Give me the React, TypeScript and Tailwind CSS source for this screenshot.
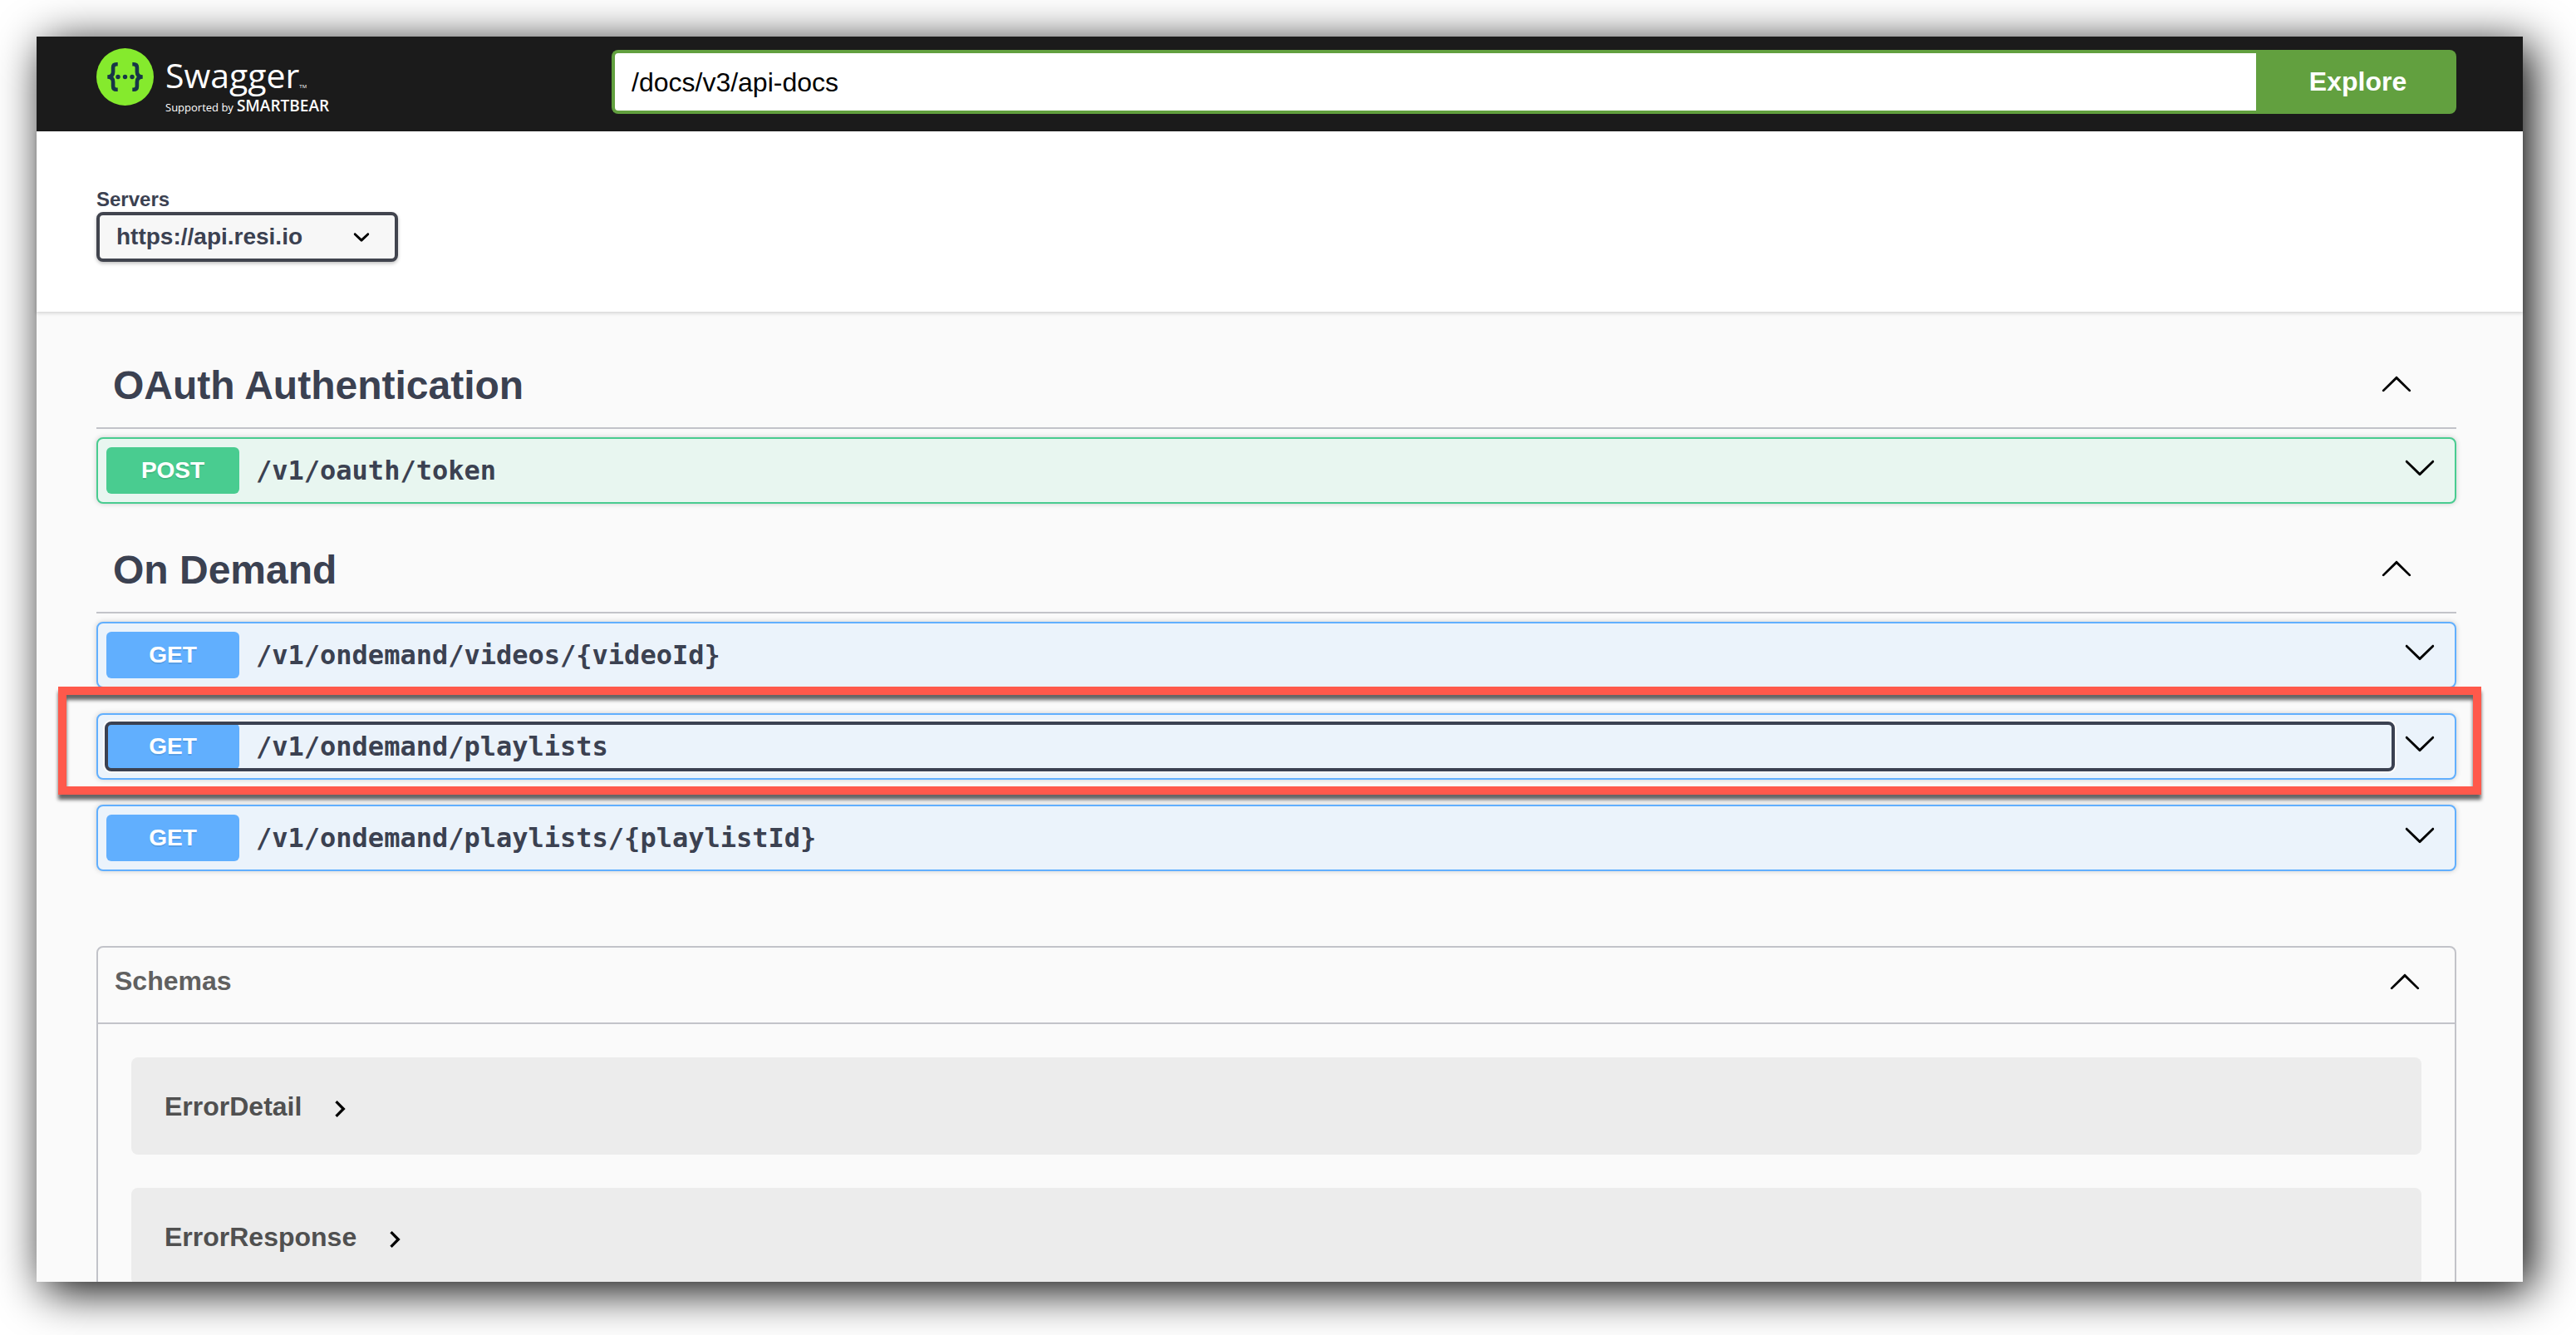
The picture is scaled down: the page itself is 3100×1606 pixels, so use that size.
import React from "react";

type Operation = {
  method: "GET" | "POST";
  path: string;
  focused?: boolean;
};

const oauthOperations: Operation[] = [{ method: "POST", path: "/v1/oauth/token" }];

const onDemandOperations: Operation[] = [
  { method: "GET", path: "/v1/ondemand/videos/{videoId}" },
  { method: "GET", path: "/v1/ondemand/playlists", focused: true },
  { method: "GET", path: "/v1/ondemand/playlists/{playlistId}" },
];

const schemas = ["ErrorDetail", "ErrorResponse"];

function ArrowUp() {
  return (
    <svg className="size-10" viewBox="0 0 20 20" aria-hidden="true">
      <path d="M17.418 14.908c.272.268.709.268.979 0s.271-.701 0-.969l-7.908-7.83c-.27-.268-.707-.268-.979 0l-7.908 7.83c-.27.268-.271.701 0 .969.271.268.709.268.979 0L10 7.767l7.418 7.141z" />
    </svg>
  );
}

function ArrowDown() {
  return (
    <svg className="size-10" viewBox="0 0 20 20" aria-hidden="true">
      <path d="M17.418 6.109c.272-.268.709-.268.979 0s.271.701 0 .969l-7.908 7.83c-.27.268-.707.268-.979 0l-7.908-7.83c-.27-.268-.271-.701 0-.969.271-.268.709-.268.979 0L10 13.25l7.418-7.141z" />
    </svg>
  );
}

function Logo() {
  return (
    <a href="#" aria-label="Swagger" className="flex w-[620px] shrink-0 items-start gap-3.5">
      <svg className="size-[69px] shrink-0" viewBox="0 0 69 69" aria-hidden="true">
        <circle cx="34.5" cy="34.5" r="34.5" fill="#85ea2d" />
        <g fill="none" stroke="#173647" strokeWidth="4.6">
          <path d="M25.7 19.2h-1.6q-4 0-4 4v5.3q0 6-6.8 6q6.8 0 6.8 6v5.3q0 4 4 4h1.6" />
          <path d="M43.3 19.2h1.6q4 0 4 4v5.3q0 6 6.8 6q-6.8 0-6.8 6v5.3q0 4-4 4h-1.6" />
        </g>
        <g fill="#173647">
          <circle cx="26" cy="34.5" r="2.7" />
          <circle cx="34.5" cy="34.5" r="2.7" />
          <circle cx="43" cy="34.5" r="2.7" />
        </g>
      </svg>
      <div className="flex flex-col gap-[3px] pt-2 font-['Open_Sans',sans-serif] text-white">
        <div className="flex items-baseline">
          <span className="text-[41px] leading-[48px]">Swagger</span>
          <span className="text-[6px] leading-none">TM</span>
        </div>
        <div className="flex items-baseline gap-1 leading-5">
          <span className="text-[13px]">Supported by</span>
          <span className="text-[19px] font-semibold">SMARTBEAR</span>
        </div>
      </div>
    </a>
  );
}

function TopBar() {
  return (
    <header className="flex shrink-0 items-start bg-[#1b1b1b] pt-3.5 pr-20 pl-[72px]">
      <Logo />
      <form className="mt-0.5 mb-[21px] flex h-[77px] min-w-0 flex-1" onSubmit={(e) => e.preventDefault()}>
        <input
          type="text"
          aria-label="API definition URL"
          defaultValue="/docs/v3/api-docs"
          className="min-w-0 flex-1 rounded-l-lg border-4 border-r-0 border-[#62a03f] bg-white px-5 text-[32px] text-black outline-none"
        />
        <button
          type="submit"
          className="w-[241px] shrink-0 rounded-r-lg bg-[#62a03f] pb-0.5 pl-1 text-[32px] font-bold text-white"
        >
          Explore
        </button>
      </form>
    </header>
  );
}

function Servers() {
  return (
    <section className="shrink-0 bg-white pt-[69px] pr-20 pb-[60px] pl-[72px] shadow-[0_2px_4px_rgba(0,0,0,0.15)]">
      <label htmlFor="servers" className="mb-0.5 block text-2xl leading-[26px] font-bold">
        Servers
      </label>
      <div className="relative w-[363px]">
        <select
          id="servers"
          className="block h-[60px] w-full appearance-none rounded-lg border-4 border-[#41444e] bg-[#f7f7f7] pr-20 pl-5 text-[28px] font-bold shadow-[0_2px_4px_rgba(0,0,0,0.25)]"
        >
          <option>https://api.resi.io</option>
        </select>
        <svg
          className="pointer-events-none absolute top-2.5 right-6 size-10"
          viewBox="0 0 20 20"
          aria-hidden="true"
        >
          <path d="M13.418 7.859c.271-.268.709-.268.978 0 .27.268.272.701 0 .969l-3.908 3.83c-.27.268-.707.268-.979 0l-3.908-3.83c-.27-.267-.27-.701 0-.969.271-.268.709-.268.978 0L10 11l3.418-3.141z" />
        </svg>
      </div>
    </section>
  );
}

function OperationRow({ method, path, focused }: Operation) {
  const post = method === "POST";
  return (
    <div
      className={
        "relative flex items-center rounded-lg border-2 p-2.5 shadow-[0_0_6px_rgba(0,0,0,0.19)] " +
        (post ? "border-[#49cc90] bg-[#e8f6f0]" : "border-[#61affe] bg-[#ebf3fb]") +
        (focused ? " z-10" : "")
      }
    >
      <button type="button" className="relative flex min-w-0 flex-1 items-center text-left">
        <span
          className={
            "flex h-14 w-40 shrink-0 items-center justify-center rounded-md text-[28px] font-bold text-white [text-shadow:0_2px_0_rgba(0,0,0,0.1)] " +
            (post ? "bg-[#49cc90]" : "bg-[#61affe]")
          }
        >
          {method}
        </span>
        <span className="px-5 font-['DejaVu_Sans_Mono',monospace] text-[32px] leading-10 font-bold">{path}</span>
        {focused && (
          <span className="absolute -inset-0.5 rounded-lg border-4 border-[#3b4151] shadow-[0_0_0_2px_#fff]" />
        )}
      </button>
      <button type="button" aria-label={"Expand " + path} className="mr-3 ml-3 pb-2">
        <ArrowDown />
      </button>
      {focused && (
        <div className="pointer-events-none absolute -top-[34px] -right-8 -bottom-5 -left-12 border-[10px] border-[#ff594b] drop-shadow-[0_6px_2px_rgba(0,0,0,0.6)]" />
      )}
    </div>
  );
}

function TagSection({ title, operations }: { title: string; operations: Operation[] }) {
  return (
    <section className="mb-[30px]">
      <div className="mb-2.5 flex h-[102px] items-center border-b-2 border-[#c2c3c9] pr-[52px] pl-5">
        <h3 className="flex-1 text-5xl font-bold">{title}</h3>
        <button type="button" aria-label={"Collapse " + title} className="pb-1.5">
          <ArrowUp />
        </button>
      </div>
      <div className="flex flex-col gap-[30px]">
        {operations.map((op) => (
          <OperationRow key={op.path} {...op} />
        ))}
      </div>
    </section>
  );
}

function Schemas() {
  return (
    <section className="mt-[90px] rounded-lg border-2 border-[#c2c3c9]">
      <div className="flex h-[92px] items-center border-b-2 border-[#c2c3c9] pr-10 pb-2.5 pl-5">
        <h4 className="flex-1 text-[32px] leading-10 font-bold text-[#606060]">Schemas</h4>
        <button type="button" aria-label="Collapse Schemas">
          <ArrowUp />
        </button>
      </div>
      <div className="flex flex-col gap-10 p-10">
        {schemas.map((name) => (
          <div key={name} className="flex h-[117px] items-center rounded-lg bg-[#ececec] px-10">
            <button type="button" className="flex items-center gap-[26px]">
              <span className="text-[32px] leading-10 font-bold text-[#505050]">{name}</span>
              <span className="pt-1.5">
                <svg className="size-10" viewBox="0 0 24 24" aria-hidden="true">
                  <path d="M10 6L8.59 7.41 13.17 12l-4.58 4.59L10 18l6-6z" />
                </svg>
              </span>
            </button>
          </div>
        ))}
      </div>
    </section>
  );
}

export default function App() {
  return (
    <div className="flex h-screen overflow-hidden bg-white pt-11 pr-16 pb-16 pl-11">
      <div className="flex min-w-0 flex-1 flex-col bg-[#fafafa] font-['Liberation_Sans',Arial,sans-serif] text-[#3b4151] shadow-[10px_10px_52px_#000]">
        <TopBar />
        <Servers />
        <main className="min-h-0 flex-1 overflow-hidden pt-[39px] pr-20 pl-[72px]">
          <TagSection title="OAuth Authentication" operations={oauthOperations} />
          <TagSection title="On Demand" operations={onDemandOperations} />
          <Schemas />
        </main>
      </div>
    </div>
  );
}
